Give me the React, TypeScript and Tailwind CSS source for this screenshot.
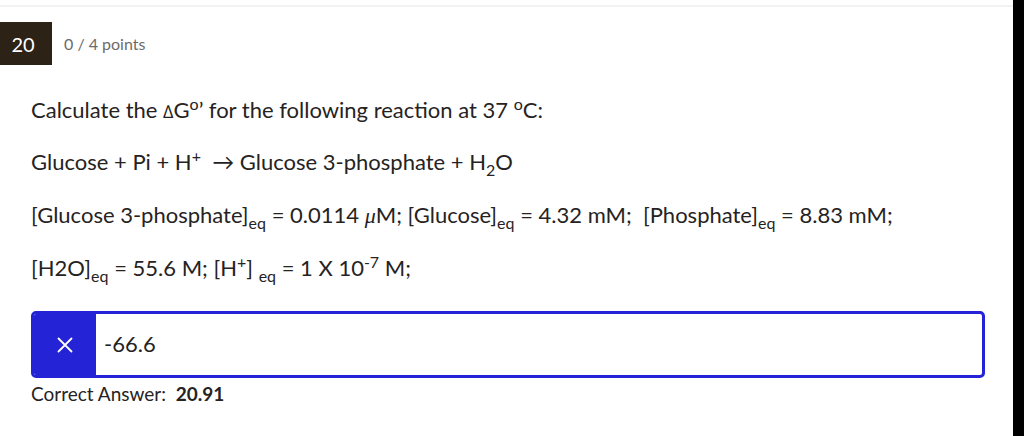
import React from 'react';

const Sub = ({ children }: { children: React.ReactNode }) => (
    <span className="text-[16px] relative top-[6px] leading-none">{children}</span>
);

const Sup = ({ children }: { children: React.ReactNode }) => (
    <span className="text-[16px] relative top-[-8px] leading-none">{children}</span>
);

export default function App() {
    return (
        <div className="flex w-[1024px] h-[436px] bg-white overflow-hidden" style={{ fontFamily: 'Lato, "Open Sans", sans-serif' }}>
            <div className="flex-1 flex flex-col">
                <div className="h-[5px]" />
                <div className="h-[2px] bg-[#f2f2f2]" />
                <div className="flex items-center mt-[15px] h-[43px]">
                    <div className="w-[52px] h-full bg-[#2d2216] text-white text-[20px] flex items-center justify-center pr-[6px]">20</div>
                    <span className="ml-[12px] text-[16px] text-[#6b6b6b]">0 / 4 points</span>
                </div>

                <div className="pl-[31px] text-[22px] text-[#26231f] leading-[28px]">
                    <p className="mt-[31px] h-[28px] whitespace-nowrap">
                        Calculate the <span className="text-[18px]">∆</span>G<Sup>o</Sup>’ for the following reaction at 37 <Sup>o</Sup>C:
                    </p>
                    <p className="mt-[24px] h-[28px] whitespace-nowrap">
                        Glucose + Pi + H<Sup>+</Sup>&nbsp; → Glucose 3-phosphate + H<Sub>2</Sub>O
                    </p>
                    <p className="mt-[25px] h-[28px] whitespace-nowrap">
                        [Glucose 3-phosphate]<Sub>eq</Sub> = 0.0114 <i className="font-serif">μ</i>M; [Glucose]<Sub>eq</Sub> = 4.32 mM;&nbsp; [Phosphate]<Sub>eq</Sub> = 8.83 mM;
                    </p>
                    <p className="mt-[25px] h-[28px] whitespace-nowrap">
                        [H2O]<Sub>eq</Sub> = 55.6 M; [H<Sup>+</Sup>] <Sub>eq</Sub> = 1 X 10<Sup>-7</Sup> M;
                    </p>
                </div>

                <div className="ml-[31px] mr-[28px] mt-[29px] h-[67px] flex border-[3px] border-[#2424d6] rounded-[5px] overflow-hidden">
                    <div className="w-[62px] bg-[#2424d6] flex items-center justify-center">
                        <svg width="16" height="16" viewBox="0 0 16 16" fill="none" stroke="white" strokeWidth="1.8" strokeLinecap="round">
                            <path d="M1.5 1.5 L14.5 14.5 M14.5 1.5 L1.5 14.5" />
                        </svg>
                    </div>
                    <div className="flex items-center pl-[8px] pb-[3px] text-[22px] text-[#26231f]">-66.6</div>
                </div>

                <div className="pl-[31px] mt-[4px] h-[24px] leading-[24px] text-[19px] text-[#26231f]">
                    Correct Answer:&nbsp; <span className="font-bold">20.91</span>
                </div>
            </div>
            <div className="w-[11px] bg-black" />
        </div>
    );
}
